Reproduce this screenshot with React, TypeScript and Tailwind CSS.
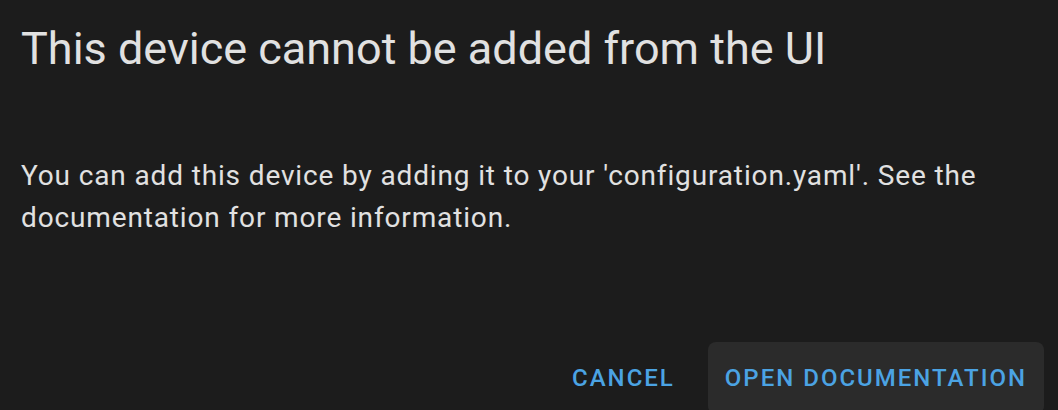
import React from "react";

export default function App() {
    return (
        <div
            className="h-[410px] w-[1058px] overflow-hidden bg-[#1c1c1c] flex flex-col"
            style={{ fontFamily: "Roboto, 'Noto Sans', sans-serif" }}
        >
            <h2 className="mt-[21px] px-[21px] text-[45px] leading-[56px] font-normal text-[#e1e1e1]">
                This device cannot be added from the UI
            </h2>
            <p className="mt-[78px] px-[21px] text-[28px] leading-[42px] tracking-[0.86px] text-[#e1e1e1]">
                You can add this device by adding it to your 'configuration.yaml'. See the documentation for more information.
            </p>
            <div className="mt-auto flex justify-end items-start gap-[16px] pr-[14px] h-[68px]">
                <button className="h-[72px] px-[17px] rounded-[8px] text-[24px] font-medium tracking-[2px] uppercase text-[#4ba3e3]">
                    Cancel
                </button>
                <button className="h-[72px] px-[17px] rounded-[8px] bg-[#2b2b2b] text-[24px] font-medium tracking-[2px] uppercase text-[#4ba3e3]">
                    Open documentation
                </button>
            </div>
        </div>
    );
}
